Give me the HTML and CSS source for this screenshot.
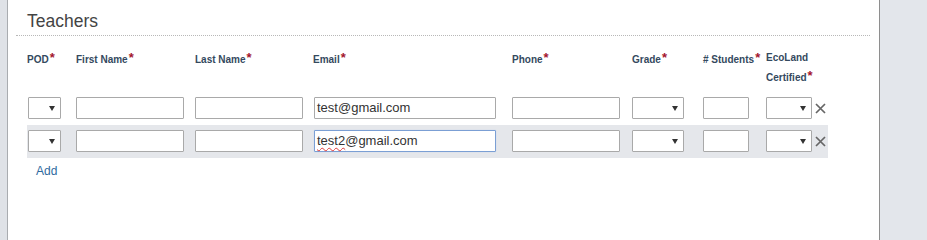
FILE: index.html
```html
<!DOCTYPE html>
<html>
<head>
<meta charset="utf-8">
<link rel="stylesheet" href="styles.css">
</head>
<body>
<div class="page">
  <div class="strip"></div>
  <div class="panel">
    <div class="section">
      <h2 class="title">Teachers</h2>
      <div class="grid head">
        <div class="lbl">POD<span class="req">*</span></div>
        <div class="lbl">First Name<span class="req">*</span></div>
        <div class="lbl">Last Name<span class="req">*</span></div>
        <div class="lbl">Email<span class="req">*</span></div>
        <div class="lbl">Phone<span class="req">*</span></div>
        <div class="lbl">Grade<span class="req">*</span></div>
        <div class="lbl"># Students<span class="req">*</span></div>
        <div class="lbl two">EcoLand<br>Certified<span class="req">*</span></div>
        <div></div>
      </div>
      <div class="grid row">
        <div class="select w-pod"><span class="caret"></span></div>
        <div class="input w-name"></div>
        <div class="input w-name"></div>
        <div class="input w-email">test@gmail.com</div>
        <div class="input w-name"></div>
        <div class="select w-grade"><span class="caret"></span></div>
        <div class="input w-small"></div>
        <div class="select w-small"><span class="caret"></span></div>
        <div class="remove"><svg width="11" height="11" viewBox="0 0 11 11"><path d="M1 1 L10 10 M10 1 L1 10" stroke="#666" stroke-width="1.7" fill="none"/></svg></div>
      </div>
      <div class="grid row alt">
        <div class="select w-pod"><span class="caret"></span></div>
        <div class="input w-name"></div>
        <div class="input w-name"></div>
        <div class="input w-email focus"><span class="spell">test2</span>@gmail.com</div>
        <div class="input w-name"></div>
        <div class="select w-grade"><span class="caret"></span></div>
        <div class="input w-small"></div>
        <div class="select w-small"><span class="caret"></span></div>
        <div class="remove"><svg width="11" height="11" viewBox="0 0 11 11"><path d="M1 1 L10 10 M10 1 L1 10" stroke="#666" stroke-width="1.7" fill="none"/></svg></div>
      </div>
      <a class="add">Add</a>
    </div>
  </div>
  <div class="rest"></div>
</div>
</body>
</html>
```
FILE: styles.css
```css
html, body {
  margin: 0;
  padding: 0;
  height: 100%;
}
body {
  font-family: "Liberation Sans", Arial, sans-serif;
  background: #e3e6eb;
  overflow: hidden;
}
.page {
  display: flex;
  min-height: 100vh;
}
.strip {
  width: 7px;
  background: #dfe2e7;
  border-right: 1px solid #a9acb0;
}
.panel {
  width: 872px;
  background: #fff;
  border-right: 1px solid #8e8e8e;
  box-shadow: 1px 0 1px #b4b6b9;
  padding: 0 9px 0 8px;
  box-sizing: border-box;
}
.rest {
  flex: 1;
  background: #e3e6eb;
}
.section {
  display: flex;
  flex-direction: column;
  align-items: flex-start;
}
.title {
  align-self: stretch;
  margin: 10px 0 0;
  padding: 0 0 3px 11px;
  font-size: 17.5px;
  font-weight: normal;
  line-height: 22px;
  color: #444;
  border-bottom: 1px dotted #b8b8b8;
}
.grid {
  display: grid;
  grid-template-columns: 49px 119px 118px 199px 120px 71px 63px 49px 13px;
  margin-left: 11px;
}
.head {
  margin-top: 12px;
  margin-bottom: 4px;
}
.lbl {
  font-size: 10px;
  font-weight: bold;
  line-height: 20px;
  color: #34495e;
  padding-top: 2px;
}
.lbl.two {
  padding-top: 0;
}
.req {
  color: #a3142e;
  font-size: 13px;
  line-height: 0;
  vertical-align: 1px;
  margin-left: 1px;
}
.row {
  padding: 5px 0 6px;
  align-items: center;
}
.row.alt {
  background: #e5e7eb;
}
.input, .select {
  box-sizing: border-box;
  height: 22px;
  background: #fff;
  border: 1px solid #a9a9a9;
  border-radius: 1px;
  font-size: 13px;
  line-height: 20px;
  color: #333;
  padding-left: 2px;
  white-space: nowrap;
}
.select {
  display: flex;
  align-items: center;
  justify-content: flex-end;
  padding-right: 5px;
}
.caret {
  width: 0;
  height: 0;
  border-left: 3px solid transparent;
  border-right: 3px solid transparent;
  border-top: 5px solid #333;
}
.w-pod { width: 33px; margin-left: 1px; }
.w-name { width: 108px; }
.w-email { width: 182px; margin-left: 1px; }
.w-grade { width: 52px; }
.w-small { width: 46px; }
.focus {
  border-color: #7b9fd4;
  box-shadow: 0 0 1px #a9c2e8;
}
.spell {
  text-decoration: underline wavy #e03a3a;
  text-decoration-thickness: 1px;
  text-underline-offset: 2px;
}
.remove {
  display: flex;
  align-items: center;
  justify-content: flex-start;
  height: 22px;
}
.add {
  margin: 5px 0 0 20px;
  font-size: 12px;
  line-height: 16px;
  color: #2f6a9e;
  cursor: pointer;
}
```
